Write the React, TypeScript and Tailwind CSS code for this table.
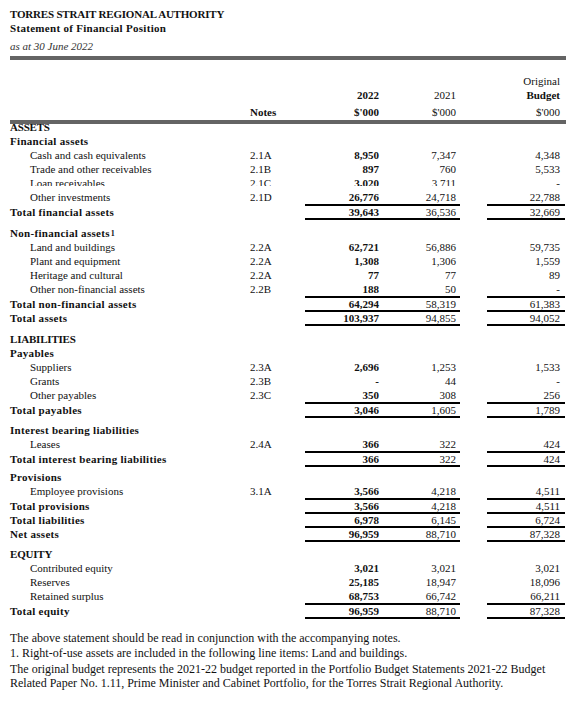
type Row = {
  label: string;
  kind: "heading" | "item" | "total";
  note?: string;
  cur?: string;
  prev?: string;
  budget?: string;
  top?: boolean;
  sup?: string;
  clip?: boolean;
};

type Section = { gap: string; rows: Row[] };

const SECTIONS: Section[] = [
  {
    gap: "mt-0",
    rows: [
      { label: "ASSETS", kind: "heading" },
      { label: "Financial assets", kind: "heading" },
      { label: "Cash and cash equivalents", kind: "item", note: "2.1A", cur: "8,950", prev: "7,347", budget: "4,348" },
      { label: "Trade and other receivables", kind: "item", note: "2.1B", cur: "897", prev: "760", budget: "5,533" },
      { label: "Loan receivables", kind: "item", note: "2.1C", cur: "3,020", prev: "3,711", budget: "-", clip: true },
      { label: "Other investments", kind: "item", note: "2.1D", cur: "26,776", prev: "24,718", budget: "22,788" },
      { label: "Total financial assets", kind: "total", cur: "39,643", prev: "36,536", budget: "32,669", top: true },
    ],
  },
  {
    gap: "mt-[6px]",
    rows: [
      { label: "Non-financial assets", kind: "heading", sup: "1" },
      { label: "Land and buildings", kind: "item", note: "2.2A", cur: "62,721", prev: "56,886", budget: "59,735" },
      { label: "Plant and equipment", kind: "item", note: "2.2A", cur: "1,308", prev: "1,306", budget: "1,559" },
      { label: "Heritage and cultural", kind: "item", note: "2.2A", cur: "77", prev: "77", budget: "89" },
      { label: "Other non-financial assets", kind: "item", note: "2.2B", cur: "188", prev: "50", budget: "-" },
      { label: "Total non-financial assets", kind: "total", cur: "64,294", prev: "58,319", budget: "61,383", top: true },
      { label: "Total assets", kind: "total", cur: "103,937", prev: "94,855", budget: "94,052" },
    ],
  },
  {
    gap: "mt-[6px]",
    rows: [
      { label: "LIABILITIES", kind: "heading" },
      { label: "Payables", kind: "heading" },
      { label: "Suppliers", kind: "item", note: "2.3A", cur: "2,696", prev: "1,253", budget: "1,533" },
      { label: "Grants", kind: "item", note: "2.3B", cur: "-", prev: "44", budget: "-" },
      { label: "Other payables", kind: "item", note: "2.3C", cur: "350", prev: "308", budget: "256" },
      { label: "Total payables", kind: "total", cur: "3,046", prev: "1,605", budget: "1,789", top: true },
    ],
  },
  {
    gap: "mt-[5px]",
    rows: [
      { label: "Interest bearing liabilities", kind: "heading" },
      { label: "Leases", kind: "item", note: "2.4A", cur: "366", prev: "322", budget: "424" },
      { label: "Total interest bearing liabilities", kind: "total", cur: "366", prev: "322", budget: "424", top: true },
    ],
  },
  {
    gap: "mt-[3px]",
    rows: [
      { label: "Provisions", kind: "heading" },
      { label: "Employee provisions", kind: "item", note: "3.1A", cur: "3,566", prev: "4,218", budget: "4,511" },
      { label: "Total provisions", kind: "total", cur: "3,566", prev: "4,218", budget: "4,511", top: true },
      { label: "Total liabilities", kind: "total", cur: "6,978", prev: "6,145", budget: "6,724" },
      { label: "Net assets", kind: "total", cur: "96,959", prev: "88,710", budget: "87,328" },
    ],
  },
  {
    gap: "mt-[5px]",
    rows: [
      { label: "EQUITY", kind: "heading" },
      { label: "Contributed equity", kind: "item", cur: "3,021", prev: "3,021", budget: "3,021" },
      { label: "Reserves", kind: "item", cur: "25,185", prev: "18,947", budget: "18,096" },
      { label: "Retained surplus", kind: "item", cur: "68,753", prev: "66,742", budget: "66,211" },
      { label: "Total equity", kind: "total", cur: "96,959", prev: "88,710", budget: "87,328", top: true },
    ],
  },
];

// all-caps headings run a little narrower than the mixed-case bold labels
const isCaps = (s: string) => s === s.toUpperCase();

function StatementRow({ row }: { row: Row }) {
  if (row.kind === "total") {
    const line = row.top ? "border-t-2 border-b-2 border-black" : "border-b-2 border-black";
    return (
      <div className="flex items-start font-bold">
        <div className={`w-[240px] tracking-[0.3px] leading-[12px] ${row.top ? "pt-[2px]" : ""}`}>{row.label}</div>
        <div className="w-[55px]" />
        <div className={`w-[77px] pr-[3px] text-right leading-[12px] ${line}`}>{row.cur}</div>
        <div className={`w-[78px] pr-[4px] text-right leading-[12px] font-normal ${line}`}>{row.prev}</div>
        <div className="w-[27px]" />
        <div className={`w-[78px] pr-[5px] text-right leading-[12px] font-normal ${line}`}>{row.budget}</div>
      </div>
    );
  }

  if (row.kind === "heading") {
    return (
      <div
        className={`h-[14px] leading-[14px] font-bold ${isCaps(row.label) ? "tracking-[-0.2px]" : "tracking-[0.3px]"}`}
      >
        {row.label}
        {row.sup && <sup className="relative -top-[1px] ml-[1px] text-[8px]">{row.sup}</sup>}
      </div>
    );
  }

  return (
    <div className="flex h-[14px] leading-[14px]">
      <div className={`flex ${row.clip ? "h-[10px] overflow-hidden" : ""}`}>
        <div className="w-[240px] pl-[20px]">{row.label}</div>
        <div className="w-[55px]">{row.note}</div>
        <div className="w-[77px] pr-[3px] text-right font-bold">{row.cur}</div>
        <div className="w-[78px] pr-[4px] text-right">{row.prev}</div>
        <div className="w-[27px]" />
        <div className="w-[78px] pr-[5px] text-right">{row.budget}</div>
      </div>
    </div>
  );
}

export default function App() {
  return (
    <div
      className="h-[703px] w-[574px] bg-white pl-[10px] pt-[7px] text-[11px] text-[#111]"
      style={{ fontFamily: '"Liberation Serif", "Times New Roman", serif' }}
    >
      <div className="font-bold leading-[14px] tracking-[-0.2px]">TORRES STRAIT REGIONAL AUTHORITY</div>
      <div className="font-bold leading-[14px] tracking-[0.3px]">Statement of Financial Position</div>
      <div className="mt-[4px] italic leading-[14px] text-[#333]">as at 30 June 2022</div>
      <div className="mt-[3px] h-[4px] w-[556px] bg-[#646464]" />

      <div className="mt-[14px] flex items-end leading-[14px]">
        <div className="w-[240px]" />
        <div className="w-[55px] font-bold">Notes</div>
        <div className="w-[77px] pr-[3px] text-right font-bold">
          <div>2022</div>
          <div className="mt-[3px]">$'000</div>
        </div>
        <div className="w-[78px] pr-[4px] text-right">
          <div>2021</div>
          <div className="mt-[3px]">$'000</div>
        </div>
        <div className="w-[27px]" />
        <div className="w-[78px] pr-[5px] text-right">
          <div>Original</div>
          <div className="font-bold">Budget</div>
          <div className="mt-[3px]">$'000</div>
        </div>
      </div>
      <div className="relative z-10 mt-[1px] h-[4px] w-[556px] bg-[#646464]" />

      <div className="-mt-[4px]">
        {SECTIONS.map((section, i) => (
          <div key={i} className={section.gap}>
            {section.rows.map((row) => (
              <StatementRow key={row.label} row={row} />
            ))}
          </div>
        ))}
      </div>

      <div className="mt-[12px] w-[556px] text-[12px] leading-[14px]">
        <p>The above statement should be read in conjunction with the accompanying notes.</p>
        <p className="mt-[1px]">1. Right-of-use assets are included in the following line items: Land and buildings.</p>
        <p className="mt-[2px]">
          The original budget represents the 2021-22 budget reported in the Portfolio Budget Statements 2021-22 Budget
          Related Paper No. 1.11, Prime Minister and Cabinet Portfolio, for the Torres Strait Regional Authority.
        </p>
      </div>
    </div>
  );
}
